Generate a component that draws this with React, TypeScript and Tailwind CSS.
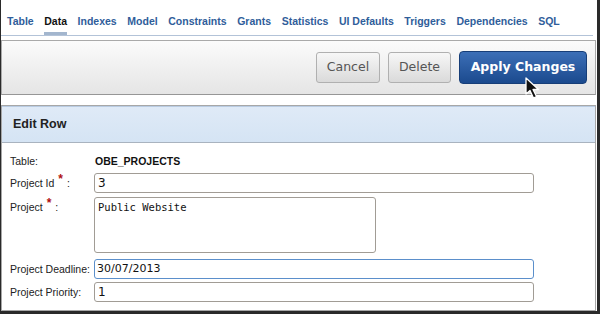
import React from 'react'

const tabs = ['Table', 'Data', 'Indexes', 'Model', 'Constraints', 'Grants', 'Statistics', 'UI Defaults', 'Triggers', 'Dependencies', 'SQL']

function Req() {
  return <span className="relative -top-[4px] ml-[4px] mr-[4px] text-[12px] font-bold text-[#b01010]">*</span>
}

function Label({ children }: { children: React.ReactNode }) {
  return <div className="w-[84px] shrink-0 text-[10.5px] leading-[20px] text-[#222] whitespace-nowrap">{children}</div>
}

function Cursor() {
  return (
    <svg className="absolute left-[523px] top-[77px]" width="22" height="24" viewBox="0 0 22 24">
      <path d="M2 1 L2 17 L6 13.5 L9.5 21 L12.5 19.5 L9 12.5 L14.5 12.5 Z" fill="#111" stroke="#fff" strokeWidth="1.3" strokeLinejoin="round" />
    </svg>
  )
}

export default function App() {
  return (
    <div className="relative w-[600px] h-[314px] overflow-hidden bg-white border-l border-r-[3px] border-b-[3px] border-[#2a2a2a] font-['Liberation_Sans',Arial,sans-serif]">
      <div className="flex gap-[10.6px] pl-[6px] pt-[15px] mr-[4px] border-b border-[#b3c3d8]">
        {tabs.map(t => (
          <div
            key={t}
            className={`pb-[5px] border-b-[3px] text-[10.5px] leading-[12px] font-bold ${t === 'Data' ? 'text-[#111] border-[#a3b6ce]' : 'text-[#2f5d9a] border-transparent'}`}
          >
            {t}
          </div>
        ))}
      </div>

      <div className="mt-[4px] mr-[1px] h-[55px] flex items-center justify-end gap-[8px] pr-[8px] border border-[#a9a9a9] border-b-[#969696] bg-gradient-to-b from-[#fbfbfb] to-[#e5e5e5] font-['DejaVu_Sans',sans-serif]">
        <button className="w-[64px] h-[31px] rounded-[3px] border border-[#b0b0b0] bg-gradient-to-b from-[#f7f7f7] to-[#dadada] text-[12.5px] text-[#555]">Cancel</button>
        <button className="w-[63px] h-[31px] rounded-[3px] border border-[#b0b0b0] bg-gradient-to-b from-[#f7f7f7] to-[#dadada] text-[12.5px] text-[#555]">Delete</button>
        <button className="w-[128px] h-[33px] rounded-[4px] border border-[#173e78] bg-gradient-to-b from-[#3c6fb7] to-[#1b4a8e] text-[12.5px] font-bold text-white">Apply Changes</button>
      </div>

      <div className="mt-[10px] mr-[1px] border border-[#a7a7a7]">
        <div className="h-[37px] flex items-center pl-[11px] bg-gradient-to-b from-[#dfeaf7] to-[#d5e4f4] border-t border-[#b9cce3] border-b border-b-[#a9b3bf] text-[12.5px] font-bold text-[#222]">
          Edit Row
        </div>
        <div className="pl-[8px] pt-[11px] pb-[8px]">
          <div className="flex items-center h-[16px]">
            <div className="w-[85px] shrink-0 text-[10.5px] text-[#222]">Table:</div>
            <div className="text-[10.5px] font-bold text-[#111]">OBE_PROJECTS</div>
          </div>
          <div className="flex mt-[3px]">
            <Label>Project Id<Req />:</Label>
            <div className="w-[440px] h-[20px] rounded-[3px] border border-[#a19c95] px-[3px] text-[12px] leading-[18px] text-[#111] font-['DejaVu_Sans',sans-serif]">3</div>
          </div>
          <div className="flex mt-[4px]">
            <Label>Project<Req />:</Label>
            <div className="w-[282px] h-[56px] rounded-[3px] border border-[#a19c95] px-[3px] pt-[2px] text-[10.5px] leading-[14px] text-[#111] font-['DejaVu_Sans_Mono',monospace]">Public Website</div>
          </div>
          <div className="flex mt-[6px]">
            <Label>Project Deadline:</Label>
            <div className="w-[440px] h-[20px] rounded-[3px] border border-[#5b8fcb] px-[2px] text-[11px] leading-[18px] text-[#111] font-['DejaVu_Sans',sans-serif]">30/07/2013</div>
          </div>
          <div className="flex mt-[3px]">
            <Label>Project Priority:</Label>
            <div className="w-[440px] h-[20px] rounded-[3px] border border-[#a19c95] px-[3px] text-[12px] leading-[18px] text-[#111] font-['DejaVu_Sans',sans-serif]">1</div>
          </div>
        </div>
      </div>

      <Cursor />
    </div>
  )
}
